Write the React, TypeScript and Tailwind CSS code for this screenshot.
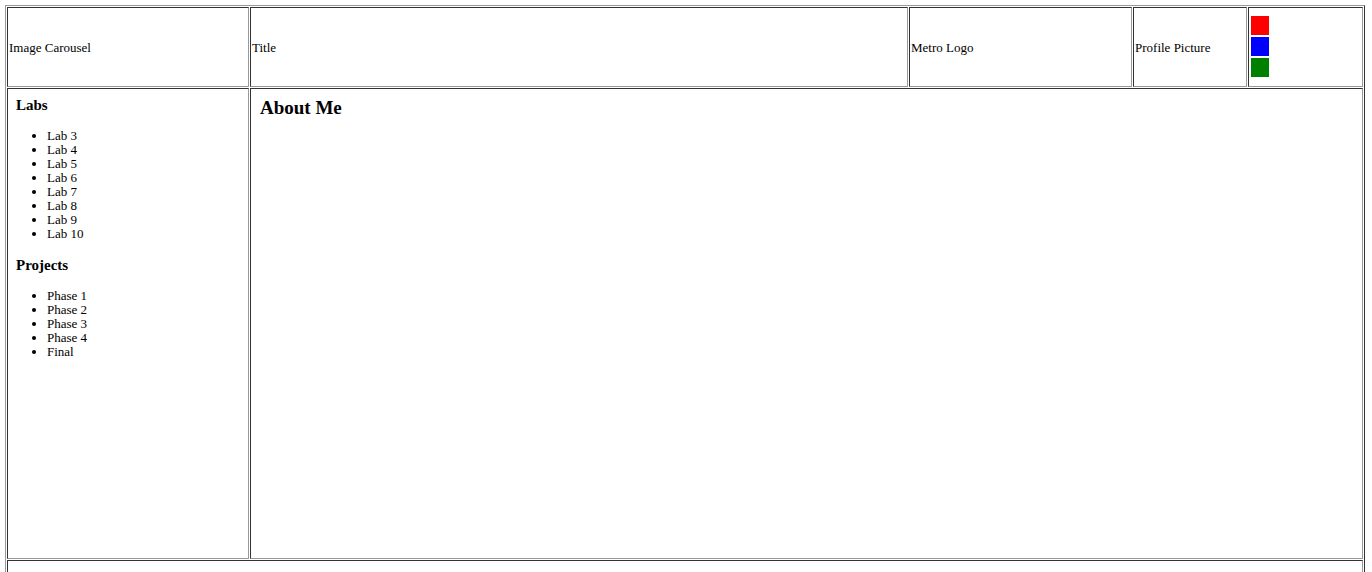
const inset = 'border border-t-[#333333] border-l-[#333333] border-b-[#999999] border-r-[#999999]';

const labs = ['Lab 3', 'Lab 4', 'Lab 5', 'Lab 6', 'Lab 7', 'Lab 8', 'Lab 9', 'Lab 10'];
const projects = ['Phase 1', 'Phase 2', 'Phase 3', 'Phase 4', 'Final'];

export default function App() {
  return (
    <div className="min-h-[572px] overflow-hidden bg-white pl-[5px] pt-[5px] font-['Liberation_Serif',serif] text-[13px] text-black">
      <div className="inline-grid grid-cols-[242px_658px_223px_114px_115px] gap-px border border-t-[#999999] border-l-[#999999] border-b-[#333333] border-r-[#333333] p-px">
        <HeaderCell>Image Carousel</HeaderCell>
        <HeaderCell>Title</HeaderCell>
        <HeaderCell>Metro Logo</HeaderCell>
        <HeaderCell>Profile Picture</HeaderCell>
        <div className={`${inset} flex h-[80px] flex-col justify-center gap-[2px] pb-[2px] pl-[2px]`}>
          <div className="h-[19px] w-[18px] bg-[#ff0000]" />
          <div className="h-[19px] w-[18px] bg-[#0000ff]" />
          <div className="h-[19px] w-[18px] bg-[#008000]" />
        </div>

        <nav className={`${inset} h-[471px] px-2 pt-[8px]`}>
          <NavGroup title="Labs" items={labs} />
          <div className="h-4" />
          <NavGroup title="Projects" items={projects} />
        </nav>
        <main className={`${inset} col-span-4 h-[471px] pl-[9px] pt-[8px]`}>
          <h2 className="text-[19px] font-bold leading-[22px]">About Me</h2>
        </main>

        <footer className={`${inset} col-span-5 h-[40px]`} />
      </div>
    </div>
  );
}

function HeaderCell({ children }: { children: string }) {
  return <div className={`${inset} flex h-[80px] items-center px-px pt-[2px]`}>{children}</div>;
}

function NavGroup({ title, items }: { title: string; items: string[] }) {
  return (
    <div>
      <h3 className="mb-[15px] text-[15px] font-bold leading-[17px]">{title}</h3>
      <ul className="list-disc pl-[31px]">
        {items.map((item) => (
          <li key={item} className="leading-[14px]">{item}</li>
        ))}
      </ul>
    </div>
  );
}
